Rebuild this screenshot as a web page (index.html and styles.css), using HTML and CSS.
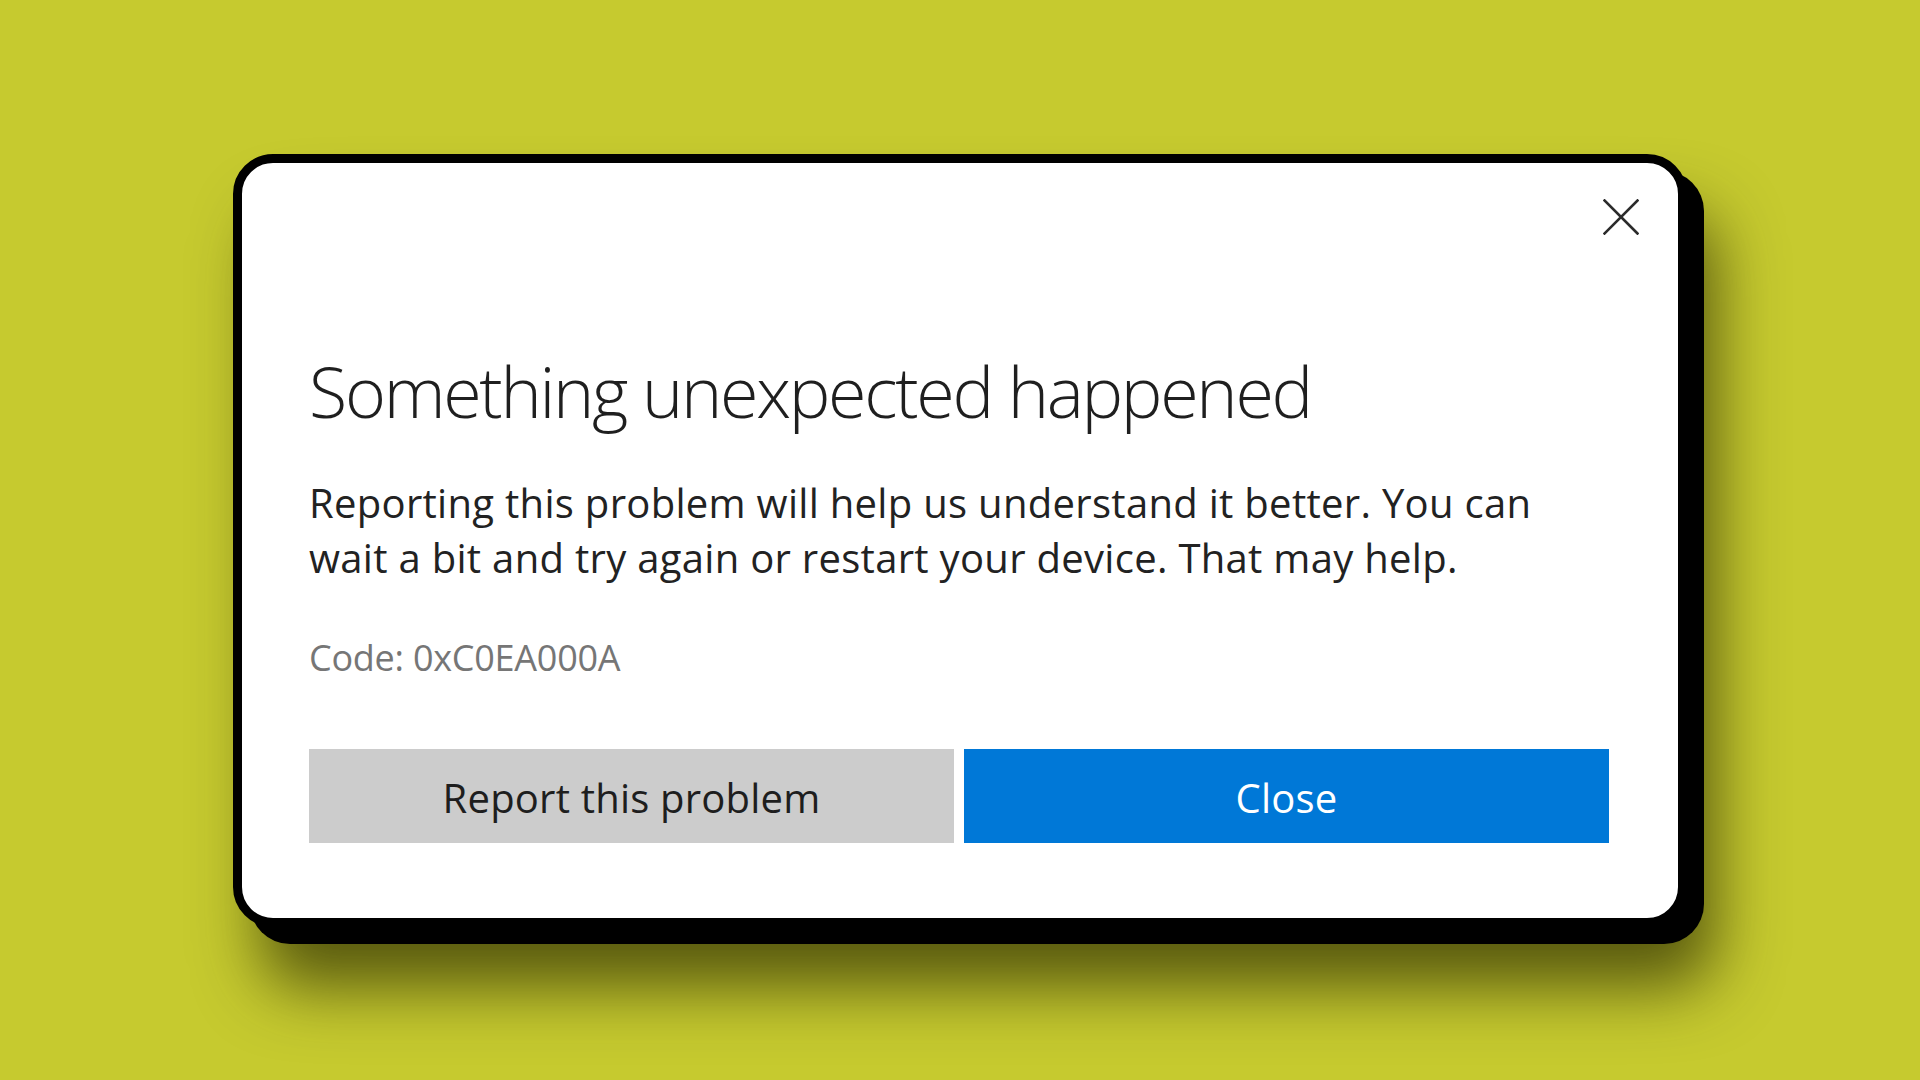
FILE: index.html
```html
<!DOCTYPE html>
<html lang="en">
<head>
<meta charset="utf-8">
<title>Something unexpected happened</title>
<link rel="stylesheet" href="styles.css">
</head>
<body>
  <div class="stage">
    <div class="dialog" role="dialog" aria-labelledby="dlg-title">
      <div class="topbar">
        <button class="icon-close" aria-label="Close">
          <svg viewBox="0 0 36 36" width="36" height="36" aria-hidden="true">
            <path d="M1.5 1.5 L34.5 34.5 M34.5 1.5 L1.5 34.5" fill="none" stroke="#2b2b2b" stroke-width="2.6" stroke-linecap="square"/>
          </svg>
        </button>
      </div>
      <h1 class="title" id="dlg-title">Something unexpected happened</h1>
      <p class="message">Reporting this problem will help us understand it better. You can wait a bit and try again or restart your device. That may help.</p>
      <p class="code">Code: 0xC0EA000A</p>
      <div class="actions">
        <button class="btn btn-secondary">Report this problem</button>
        <button class="btn btn-primary">Close</button>
      </div>
    </div>
  </div>
</body>
</html>
```
FILE: styles.css
```css
* { box-sizing: border-box; }

html, body {
  margin: 0;
  padding: 0;
  height: 100%;
}

body {
  background: #c6ca2f;
  font-family: "Open Sans", "Noto Sans", "Liberation Sans", sans-serif;
  overflow: hidden;
}

.stage {
  width: 1920px;
  height: 1080px;
  display: flex;
  align-items: center;
  justify-content: center;
}

.dialog {
  width: 1454px;
  height: 773px;
  background: #ffffff;
  border: 9px solid #000000;
  border-radius: 40px;
  box-shadow:
    17px 17px 0 0 #000000,
    28px 60px 65px rgba(40, 40, 0, 0.7);
  padding: 0 69px 75px 67px;
  display: flex;
  flex-direction: column;
}

.topbar {
  display: flex;
  justify-content: flex-end;
  padding-top: 36px;
  margin-right: -30px;
}

.icon-close {
  width: 36px;
  height: 36px;
  padding: 0;
  border: 0;
  background: transparent;
  display: block;
  cursor: pointer;
}

.icon-close svg { display: block; }

.title {
  margin: 120px 0 0 0;
  font-size: 70px;
  line-height: 72px;
  font-weight: 300;
  letter-spacing: -2.3px;
  color: #1f1f1f;
}

.message {
  margin: 48px 0 0 0;
  max-width: 1265px;
  font-size: 40px;
  line-height: 55px;
  font-weight: 400;
  letter-spacing: 0.3px;
  color: #222222;
}

.code {
  margin: 55px 0 0 0;
  font-size: 36px;
  line-height: 36px;
  letter-spacing: -0.25px;
  color: #767676;
}

.actions {
  margin-top: 73px;
  display: grid;
  grid-template-columns: 1fr 1fr;
  gap: 10px;
}

.btn {
  height: 94px;
  border: 0;
  border-radius: 0;
  font-family: inherit;
  font-size: 40px;
  letter-spacing: 0.2px;
  padding: 4px 0 0 0;
  display: flex;
  align-items: center;
  justify-content: center;
  cursor: pointer;
}

.btn-secondary {
  background: #cccccc;
  color: #1e1e1e;
}

.btn-primary {
  background: #0078d7;
  color: #ffffff;
}
```
